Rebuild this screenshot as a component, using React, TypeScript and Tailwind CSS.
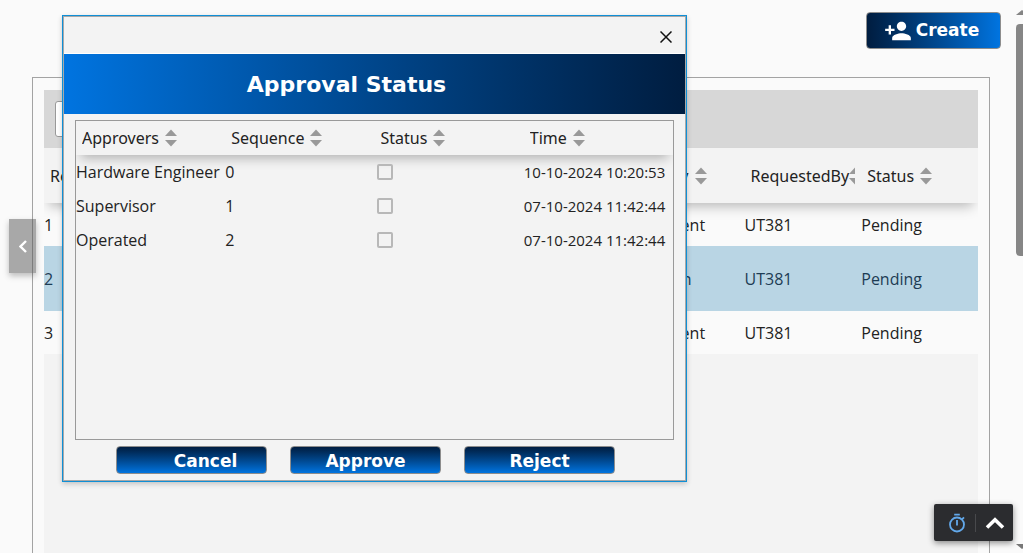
import { useState } from 'react';
import { MdPersonAddAlt1 } from 'react-icons/md';

const requestColumns = ['Ref', '', '', '', '', 'Priority', 'RequestedBy', 'Status'];

const requests = [
  { id: '1', type: 'Statement', by: 'UT381', status: 'Pending' },
  { id: '2', type: 'Location', by: 'UT381', status: 'Pending' },
  { id: '3', type: 'Statement', by: 'UT381', status: 'Pending' },
];

const approvers = [
  { name: 'Hardware Engineer', sequence: 0, time: '10-10-2024 10:20:53' },
  { name: 'Supervisor', sequence: 1, time: '07-10-2024 11:42:44' },
  { name: 'Operated', sequence: 2, time: '07-10-2024 11:42:44' },
];

function SortIcon() {
  return (
    <svg viewBox="0 0 12 18" className="h-[18px] w-3 shrink-0 fill-[#999999]">
      <path d="M6 0.5L12 7H0z" />
      <path d="M6 17.5L12 11H0z" />
    </svg>
  );
}

function ColumnHeader({ label, tight }: { label: string; tight?: boolean }) {
  return (
    <th className="px-1.5 font-normal text-left">
      {label && (
        <div className={tight ? 'flex items-center overflow-hidden' : 'flex items-center gap-1.5 overflow-hidden'}>
          <span>{label}</span>
          <SortIcon />
        </div>
      )}
    </th>
  );
}

function RequestTable() {
  return (
    <table className="w-full table-fixed border-collapse">
      <thead className="relative bg-[#f3f3f3] shadow-[0_8px_12px_-5px_rgba(0,0,0,0.28)]">
        <tr className="h-[55px]">
          {requestColumns.map((label, i) => (
            <ColumnHeader key={i} label={label} tight={label === 'RequestedBy'} />
          ))}
        </tr>
      </thead>
      <tbody className='font-["Open_Sans","Noto_Sans",sans-serif]'>
        {requests.map((r) => (
          <tr
            key={r.id}
            className={r.id === '2' ? 'h-[65px] bg-[#b9d5e4] text-[#1d3c54]' : 'h-[43px] bg-[#fafafa]'}
          >
            <td>{r.id}</td>
            <td colSpan={4} />
            <td>{r.type}</td>
            <td>{r.by}</td>
            <td>{r.status}</td>
          </tr>
        ))}
      </tbody>
    </table>
  );
}

function ApprovalDialog() {
  const [checked, setChecked] = useState<Record<number, boolean>>({});
  const button =
    'h-7 w-[151px] rounded border border-[#8d8d8d] bg-linear-to-b from-[#001d40] to-[#0074e0] font-["DejaVu_Sans"] text-[17px] leading-7 font-bold text-white';

  return (
    <div
      role="dialog"
      aria-labelledby="approval-title"
      className="absolute top-[15px] left-[62px] w-[625px] border border-[#0f8fd6] bg-[#f3f3f3] shadow-[0_2px_5px_rgba(0,0,0,0.2)]"
    >
      <div className="border border-[#a8a8a8]">
        <div className="flex h-[37px] items-center justify-end border-b border-white pt-1 pr-[11px]">
          <button type="button" aria-label="Close" className="p-0.5">
            <svg viewBox="0 0 12 12" className="size-3 stroke-[#111111]" fill="none" strokeWidth="1.5">
              <path d="M0.5 0.5L11.5 11.5M11.5 0.5L0.5 11.5" />
            </svg>
          </button>
        </div>
        <div className="flex h-[60px] items-center justify-center bg-linear-to-r from-[#0074e0] to-[#001d40] pr-14">
          <h2 id="approval-title" className='font-["DejaVu_Sans"] text-[22px] font-bold text-white'>
            Approval Status
          </h2>
        </div>
        <div className="mx-[11px] mt-1.5 h-80 overflow-hidden border border-[#999999]">
          <table className="w-full table-fixed border-collapse">
            <thead className="relative bg-[#f3f3f3] shadow-[0_8px_12px_-5px_rgba(0,0,0,0.28)]">
              <tr className="h-[34px]">
                <ColumnHeader label="Approvers" />
                <ColumnHeader label="Sequence" />
                <ColumnHeader label="Status" />
                <ColumnHeader label="Time" />
              </tr>
            </thead>
            <tbody className='font-["Open_Sans","Noto_Sans",sans-serif]'>
              {approvers.map((a) => (
                <tr key={a.sequence} className="relative h-[34px]">
                  <td className="whitespace-nowrap">{a.name}</td>
                  <td>{a.sequence}</td>
                  <td>
                    <input
                      type="checkbox"
                      aria-label={`${a.name} approved`}
                      checked={Boolean(checked[a.sequence])}
                      onChange={(e) => setChecked({ ...checked, [a.sequence]: e.target.checked })}
                      className="ml-0.5 block size-4 appearance-none rounded-[2px] border-2 border-[#b8b8b8] checked:bg-[#0074e0]"
                    />
                  </td>
                  <td className="text-[15px] whitespace-nowrap">{a.time}</td>
                </tr>
              ))}
            </tbody>
          </table>
        </div>
        <div className="flex justify-center gap-[23px] py-1.5 pr-[18px]">
          <button type="button" className={`${button} pl-7`}>Cancel</button>
          <button type="button" className={button}>Approve</button>
          <button type="button" className={button}>Reject</button>
        </div>
      </div>
    </div>
  );
}

function ScrollTrack() {
  return (
    <div className="flex w-[7px] flex-col overflow-hidden">
      <svg viewBox="0 0 12 5" className="mt-[10px] h-[5px] w-3 shrink-0 fill-[#858585]">
        <path d="M6 0L12 5H0z" />
      </svg>
      <div className="mt-[9px] h-[232px] w-3 rounded bg-[#868686]" />
      <svg viewBox="0 0 12 5" className="mt-auto mb-1 h-[5px] w-3 shrink-0 fill-[#777777]">
        <path d="M0 0H12L6 5z" />
      </svg>
    </div>
  );
}

export default function App() {
  return (
    <div className='relative flex h-screen overflow-hidden bg-[#fafafa] font-["Noto_Sans",sans-serif] text-base text-[#222222]'>
      <main className="flex min-w-0 flex-1 flex-col">
        <div className="flex justify-end pt-3 pr-[15px]">
          <button
            type="button"
            className='flex h-[37px] w-[135px] items-center justify-center gap-1 rounded border border-[#8d8d8d] bg-linear-to-r from-[#001d40] to-[#0074e0] pr-1 font-["DejaVu_Sans"] text-[17px] font-bold text-white'
          >
            <MdPersonAddAlt1 className="size-7 -scale-x-100" />
            Create
          </button>
        </div>
        <section className="mt-7 mr-[26px] ml-8 flex-1 border border-b-0 border-[#a3a3a3] px-[11px] pt-3">
          <div className="h-full overflow-hidden bg-[#f3f3f3]">
            <div className="flex h-[58px] items-center bg-[#d7d7d7] pl-[11px]">
              <input
                type="text"
                aria-label="Search"
                className="h-9 w-48 rounded-[3px] border border-[#999999] bg-white px-2"
              />
            </div>
            <RequestTable />
          </div>
        </section>
      </main>
      <ScrollTrack />

      <ApprovalDialog />

      <button
        type="button"
        aria-label="Collapse menu"
        className="absolute top-[219px] left-[9px] flex h-[54px] w-[27px] items-center justify-center bg-[#555555]/50 shadow-[0_3px_6px_rgba(0,0,0,0.25)]"
      >
        <svg viewBox="0 0 8 13" className="h-[13px] w-2 stroke-white" fill="none" strokeWidth="2.4">
          <path d="M7 1L1.5 6.5L7 12" />
        </svg>
      </button>

      <div className="absolute right-2.5 bottom-3 flex h-[37px] w-[79px] items-center rounded-[2px] bg-[#2b2c2f] pl-1 shadow-[0_2px_6px_rgba(0,0,0,0.45)]">
        <button type="button" aria-label="Timer" className="flex flex-1 justify-center">
          <svg viewBox="0 0 18 20" className="h-5 w-[18px] stroke-[#62a8ea]" fill="none" strokeWidth="1.8">
            <circle cx="9" cy="11.5" r="7" />
            <path d="M6.2 1.6h5.6M9 7v5.5M14 6.3l2-2" />
          </svg>
        </button>
        <div className="h-[18px] w-px bg-[#48494c]" />
        <button type="button" aria-label="Expand" className="flex flex-1 justify-center">
          <svg viewBox="0 0 20 12" className="h-3 w-5 stroke-white" fill="none" strokeWidth="3.6">
            <path d="M2 10.5L10 2.8L18 10.5" />
          </svg>
        </button>
      </div>
    </div>
  );
}
